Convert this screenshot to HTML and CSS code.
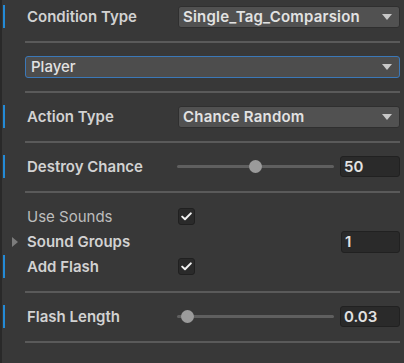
FILE: index.html
```html
<!DOCTYPE html>
<html lang="en">
<head>
    <meta charset="UTF-8">
    <meta name="viewport" content="width=device-width, initial-scale=1.0">
    <title>Inspector</title>
    <link rel="stylesheet" href="styles.css">
</head>
<body>
    <div class="inspector">
        <div class="section first">
            <div class="row">
                <span class="mark on"></span>
                <span class="gutter"></span>
                <span class="label">Condition Type</span>
                <div class="dropdown">
                    <span>Single_Tag_Comparsion</span>
                    <span class="arrow"></span>
                </div>
            </div>
        </div>
        <div class="sep"></div>

        <div class="section">
            <div class="row">
                <span class="mark"></span>
                <div class="dropdown wide focused">
                    <span>Player</span>
                    <span class="arrow"></span>
                </div>
            </div>
        </div>
        <div class="sep"></div>

        <div class="section">
            <div class="row">
                <span class="mark on"></span>
                <span class="gutter"></span>
                <span class="label">Action Type</span>
                <div class="dropdown">
                    <span>Chance Random</span>
                    <span class="arrow"></span>
                </div>
            </div>
        </div>
        <div class="sep"></div>

        <div class="section">
            <div class="row">
                <span class="mark on"></span>
                <span class="gutter"></span>
                <span class="label">Destroy Chance</span>
                <div class="slider">
                    <div class="track"></div>
                    <div class="thumb" style="left: calc((100% - 13px) * 0.5)"></div>
                </div>
                <div class="field">50</div>
            </div>
        </div>
        <div class="sep"></div>

        <div class="section group">
            <div class="row">
                <span class="mark"></span>
                <span class="gutter"></span>
                <span class="label plain">Use Sounds</span>
                <span class="checkbox">
                    <svg width="11" height="9" viewBox="0 0 11 9"><path d="M1.2 4.6 L4 7.3 L9.8 1.4" fill="none" stroke="#f2f2f2" stroke-width="2" stroke-linecap="round" stroke-linejoin="round"/></svg>
                </span>
            </div>
            <div class="row">
                <span class="mark"></span>
                <span class="gutter"><span class="fold"></span></span>
                <span class="label">Sound Groups</span>
                <span class="spacer"></span>
                <div class="field small">1</div>
            </div>
            <div class="row">
                <span class="mark on"></span>
                <span class="gutter"></span>
                <span class="label">Add Flash</span>
                <span class="checkbox">
                    <svg width="11" height="9" viewBox="0 0 11 9"><path d="M1.2 4.6 L4 7.3 L9.8 1.4" fill="none" stroke="#f2f2f2" stroke-width="2" stroke-linecap="round" stroke-linejoin="round"/></svg>
                </span>
            </div>
        </div>
        <div class="sep"></div>

        <div class="section">
            <div class="row">
                <span class="mark on"></span>
                <span class="gutter"></span>
                <span class="label">Flash Length</span>
                <div class="slider">
                    <div class="track"></div>
                    <div class="thumb" style="left: calc((100% - 13px) * 0.03)"></div>
                </div>
                <div class="field">0.03</div>
            </div>
        </div>
        <div class="sep"></div>
    </div>
</body>
</html>
```

FILE: styles.css
```css
body {
    font-family: Inter, "Noto Sans", sans-serif;
    background-color: #383838;
    color: #d4d4d4;
    margin: 0;
    padding: 0;
    width: 404px;
    height: 363px;
    overflow: hidden;
}

.inspector {
    border-left: 2px solid #292929;
    height: 363px;
    box-sizing: border-box;
}

.section {
    padding: 12px 4px 13px 0;
    display: flex;
    flex-direction: column;
    gap: 2px;
}

.section.first {
    padding-top: 5px;
}

.row {
    display: flex;
    align-items: center;
    height: 23px;
}

.mark {
    width: 2px;
    height: 100%;
    margin-left: 1px;
    flex-shrink: 0;
}

.mark.on {
    background-color: #238ad6;
}

.gutter {
    width: 22px;
    flex-shrink: 0;
    display: flex;
    align-items: center;
}

.fold {
    width: 0;
    height: 0;
    margin-left: 7px;
    border-top: 5px solid transparent;
    border-bottom: 5px solid transparent;
    border-left: 6px solid #7c7c7c;
}

.label {
    width: 151px;
    flex-shrink: 0;
    font-size: 15px;
    font-weight: 600;
    color: #d2d2d2;
    white-space: nowrap;
}

.label.plain {
    font-weight: 400;
    color: #bdbdbd;
}

.dropdown {
    flex: 1;
    height: 20px;
    display: flex;
    align-items: center;
    justify-content: space-between;
    padding: 0 7px 0 4px;
    background-color: #515151;
    border: 1px solid #2f2f2f;
    border-radius: 3px;
    font-size: 15px;
    font-weight: 600;
    letter-spacing: 0.2px;
    color: #e2e2e2;
    white-space: nowrap;
}

.dropdown.wide {
    margin-left: 20px;
    height: 20px;
    padding-left: 5px;
    font-weight: 500;
    letter-spacing: 0;
}

.dropdown.focused {
    background-color: #4d4d4d;
    border: 1px solid #3b78b8;
}

.arrow {
    width: 0;
    height: 0;
    border-left: 5px solid transparent;
    border-right: 5px solid transparent;
    border-top: 6px solid #c8c8c8;
}

.slider {
    flex: 1;
    position: relative;
    height: 13px;
    margin-left: -1px;
    margin-right: 6px;
    display: flex;
    align-items: center;
}

.track {
    width: 100%;
    height: 3px;
    border-radius: 2px;
    background-color: #5f5f5f;
}

.thumb {
    position: absolute;
    top: 0;
    width: 13px;
    height: 13px;
    border-radius: 50%;
    background-color: #9b9b9b;
}

.field {
    width: 60px;
    height: 21px;
    box-sizing: border-box;
    padding-left: 3px;
    display: flex;
    align-items: center;
    background-color: #2a2a2a;
    border: 1px solid #212121;
    border-radius: 3px;
    font-size: 15px;
    font-weight: 600;
    color: #e2e2e2;
}

.field.small {
    width: 59px;
    height: 22px;
}

.spacer {
    flex: 1;
}

.checkbox {
    width: 17px;
    height: 17px;
    box-sizing: border-box;
    display: flex;
    align-items: center;
    justify-content: center;
    background-color: #2a2a2a;
    border: 1px solid #202020;
    border-radius: 3px;
}

.sep {
    height: 2px;
    margin: 0 4px 0 23px;
    background-color: #5a5a5a;
}
```
